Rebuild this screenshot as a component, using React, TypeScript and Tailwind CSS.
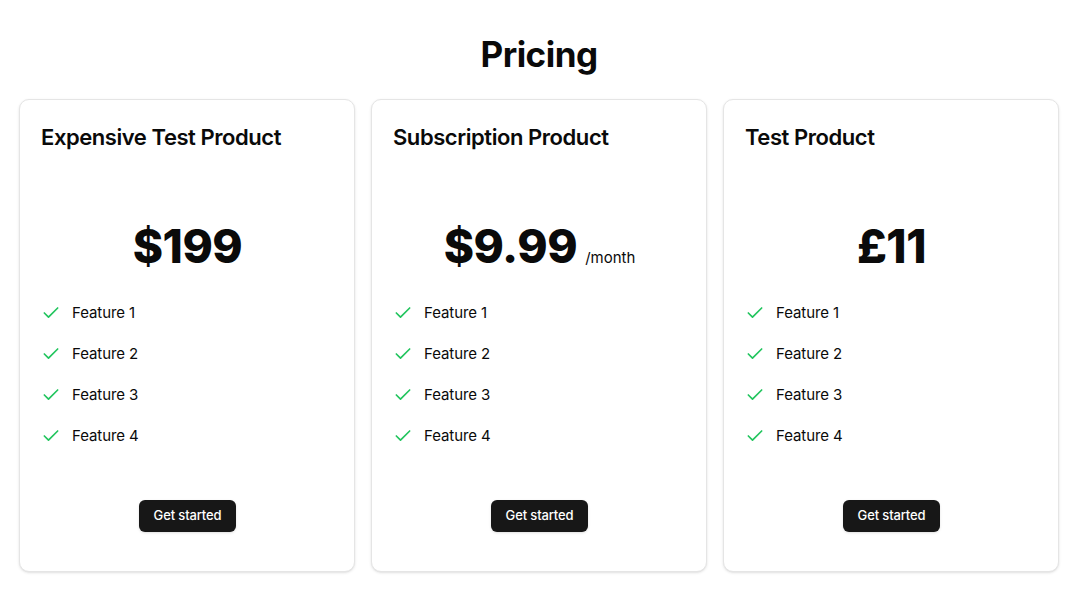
import { Check } from 'lucide-react';

type Plan = { name: string; price: string; interval?: string };

const plans: Plan[] = [
    { name: 'Expensive Test Product', price: '$199' },
    { name: 'Subscription Product', price: '$9.99', interval: '/month' },
    { name: 'Test Product', price: '£11' },
];

const features = ['Feature 1', 'Feature 2', 'Feature 3', 'Feature 4'];

const PlanCard = ({ plan }: { plan: Plan }) => (
    <div className="flex flex-col rounded-[10px] border border-[#e5e5e5] bg-white pt-[21px] pr-5 pb-[39px] pl-[21px] shadow-sm">
        <h2 className="text-[22px] leading-8 font-semibold tracking-[-0.02em] text-[#0a0a0a]">{plan.name}</h2>
        <div className="mt-[70px] flex h-[46px] items-baseline justify-center">
            <span className="text-[46px] leading-none font-extrabold tracking-[-0.01em] text-[#0a0a0a]">{plan.price}</span>
            {plan.interval && <span className="ml-2 text-[15px] leading-none text-[#0a0a0a]">{plan.interval}</span>}
        </div>
        <ul className="mt-[32px] flex flex-col gap-[17px]">
            {features.map(f => (
                <li key={f} className="flex items-center gap-[11px] text-[15px] leading-6 tracking-[-0.005em] text-[#0a0a0a]">
                    <Check className="h-5 w-5 text-[#22c55e]" strokeWidth={2} />
                    <span>{f}</span>
                </li>
            ))}
        </ul>
        <div className="mt-[52px] flex justify-center">
            <button className="h-8 rounded-md bg-[#171717] px-[15px] text-[13px] font-medium tracking-[-0.01em] text-white shadow-sm">Get started</button>
        </div>
    </div>
);

export default function App() {
    return (
        <div className="min-h-[592px] bg-white pt-[34px] pr-[21px] pl-[19px] font-['Inter',sans-serif]">
            <h1 className="mb-[25px] text-center text-[35px] leading-10 font-bold tracking-[-0.015em] text-[#0a0a0a]">Pricing</h1>
            <div className="grid grid-cols-3 gap-4">
                {plans.map(p => (
                    <PlanCard key={p.name} plan={p} />
                ))}
            </div>
        </div>
    );
}
